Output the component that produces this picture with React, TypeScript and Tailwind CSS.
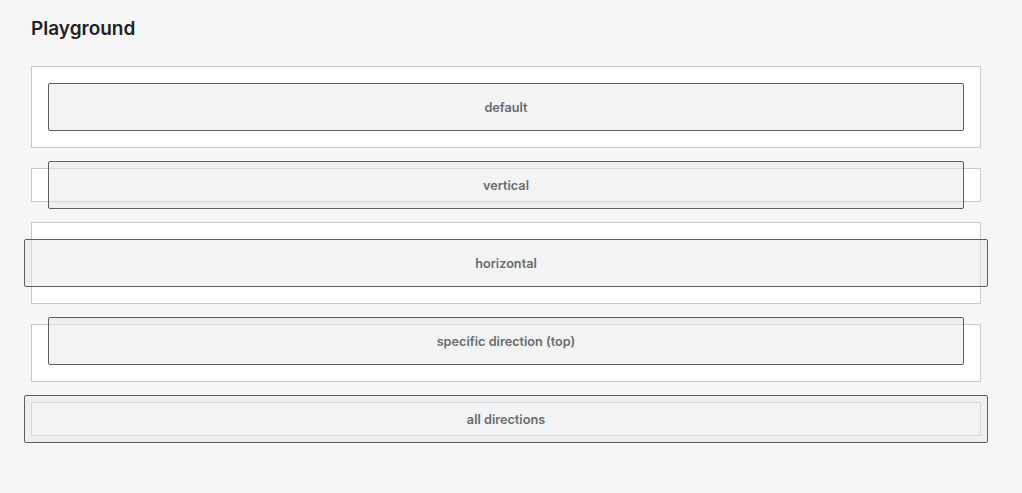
import React from "react";

function Inner({ label, extra }: { label: string; extra: string }) {
  return (
    <div
      className={`h-12 flex items-center justify-center pt-px border border-[#5e5e5e] rounded-[2px] bg-[rgba(229,231,235,0.5)] text-[12.7px] font-semibold text-[#6b6b6b] ${extra}`}
    >
      {label}
    </div>
  );
}

export default function App() {
  return (
    <div
      className="min-h-[493px] bg-[#f6f6f6] pt-[15px] pl-[31px]"
      style={{ fontFamily: "Inter, 'Noto Sans', sans-serif" }}
    >
      <h1 className="text-[19px] leading-7 font-semibold text-[#222] mb-[23px]">Playground</h1>
      <div className="w-[950px] flex flex-col gap-5">
        <div className="bg-white border border-[#c9c9c9] p-4">
          <Inner label="default" extra="" />
        </div>
        <div className="bg-white border border-[#c9c9c9] p-4">
          <Inner label="vertical" extra="-my-6" />
        </div>
        <div className="bg-white border border-[#c9c9c9] p-4">
          <Inner label="horizontal" extra="-mx-6" />
        </div>
        <div className="bg-white border border-[#c9c9c9] p-4">
          <Inner label="specific direction (top)" extra="-mt-6" />
        </div>
        <div className="bg-white border border-[#c9c9c9] p-4">
          <Inner label="all directions" extra="-m-6" />
        </div>
      </div>
    </div>
  );
}
